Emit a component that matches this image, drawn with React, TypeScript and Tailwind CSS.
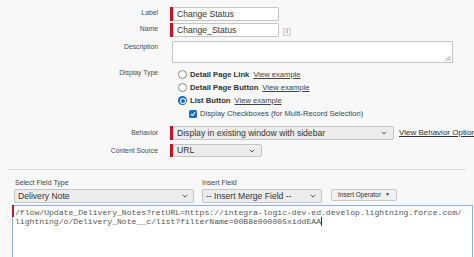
import React from 'react';

const Chevron: React.FC<{ className?: string }> = ({ className }) => (
  <svg className={className} width="6" height="4" viewBox="0 0 6 4" fill="none">
    <path d="M0.8 0.8 L3 3 L5.2 0.8" stroke="#555" strokeWidth="1" />
  </svg>
);

const RequiredBar: React.FC = () => <div className="w-[3px] self-stretch bg-[#c0182a]" />;

const Radio: React.FC<{ checked?: boolean }> = ({ checked }) =>
  checked ? (
    <div className="w-[9px] h-[9px] rounded-full bg-[#1565d8] flex items-center justify-center">
      <div className="w-[6px] h-[6px] rounded-full bg-white flex items-center justify-center">
        <div className="w-[4px] h-[4px] rounded-full bg-[#1565d8]" />
      </div>
    </div>
  ) : (
    <div className="w-[9px] h-[9px] rounded-full border border-[#8a8a8a] bg-white" />
  );

const FormLabel: React.FC<{ children: React.ReactNode; className?: string }> = ({ children, className }) => (
  <div className={`text-right text-[6.8px] text-[#4a4a56] leading-[9px] ${className ?? ''}`}>{children}</div>
);

const App: React.FC = () => {
  const radios = [
    { label: 'Detail Page Link', checked: false },
    { label: 'Detail Page Button', checked: false },
    { label: 'List Button', checked: true },
  ];

  return (
    <div
      className="w-[474px] h-[257px] overflow-hidden bg-[#f8f8f8] text-[#333]"
      style={{ fontFamily: '"Liberation Sans", Arial, sans-serif' }}
    >
      <div className="pt-[7px] grid grid-cols-[158px_1fr] gap-x-[12px]">
        {/* Label */}
        <FormLabel className="pt-[1px]">Label</FormLabel>
        <div className="flex h-[14px]">
          <RequiredBar />
          <div className="w-[106px] bg-white border border-[#c4c4c4] rounded-[1px] text-[8.6px] leading-[12px] pl-[3px]">
            Change Status
          </div>
        </div>

        {/* Name */}
        <FormLabel className="mt-[2px] pt-[1px]">Name</FormLabel>
        <div className="flex items-center mt-[2px] h-[14px]">
          <RequiredBar />
          <div className="w-[106px] h-full bg-white border border-[#c4c4c4] rounded-[1px] text-[8.6px] leading-[12px] pl-[3px]">
            Change_Status
          </div>
          <div className="ml-[4px] mt-[3px] w-[8px] h-[8px] border border-[#cfcfcf] bg-[#f2f2f2] flex items-center justify-center text-[5px] text-[#6b7fa8] font-bold leading-none">
            i
          </div>
        </div>

        {/* Description */}
        <FormLabel className="mt-[4px] pt-[1px]">Description</FormLabel>
        <div className="mt-[4px] ml-[2px] w-[281px] h-[22px] bg-white border border-[#c4c4c4] rounded-[1px] relative">
          <svg className="absolute right-[1px] bottom-[1px]" width="6" height="6" viewBox="0 0 6 6">
            <path d="M5.5 0.5 L0.5 5.5 M5.5 2.5 L2.5 5.5 M5.5 4.5 L4.5 5.5" stroke="#9a9a9a" strokeWidth="0.8" />
          </svg>
        </div>

        {/* Display Type */}
        <FormLabel className="mt-[5px]">Display Type</FormLabel>
        <div className="mt-[5px] pl-[8px]">
          {radios.map((r) => (
            <div key={r.label} className="flex items-center h-[13px]">
              <Radio checked={r.checked} />
              <span className="ml-[3px] font-bold text-[7.7px]">{r.label}</span>
              <span className="ml-[4px] underline text-[7.6px] text-[#444]">View example</span>
            </div>
          ))}
          <div className="flex items-center h-[13px] pl-[11px]">
            <div className="w-[8px] h-[8px] rounded-[1.5px] bg-[#1a6ee0] flex items-center justify-center">
              <svg width="6" height="6" viewBox="0 0 6 6" fill="none">
                <path d="M1 3.1 L2.4 4.5 L5 1.4" stroke="white" strokeWidth="1.1" />
              </svg>
            </div>
            <span className="ml-[3px] text-[7.6px] text-[#444]">Display Checkboxes (for Multi-Record Selection)</span>
          </div>
        </div>

        {/* Behavior */}
        <FormLabel className="mt-[6px] pt-[2px]">Behavior</FormLabel>
        <div className="mt-[6px] flex items-center h-[14px] whitespace-nowrap">
          <RequiredBar />
          <div className="w-[221px] shrink-0 h-full bg-[#ececec] border border-[#c4c4c4] rounded-[2px] flex items-center justify-between pl-[3px] pr-[6px] text-[8.6px]">
            <span>Display in existing window with sidebar</span>
            <Chevron />
          </div>
          <span className="ml-[5px] text-[8px] underline text-[#333]">View Behavior Options</span>
        </div>

        {/* Content Source */}
        <FormLabel className="mt-[4px] pt-[2px]">Content Source</FormLabel>
        <div className="mt-[4px] flex h-[13px]">
          <RequiredBar />
          <div className="w-[89px] h-full bg-[#ececec] border border-[#c4c4c4] rounded-[2px] flex items-center justify-between pl-[3px] pr-[6px] text-[8.6px]">
            <span>URL</span>
            <Chevron />
          </div>
        </div>
      </div>

      <div className="mt-[12px] mx-[8px] border-t border-[#dcdcdc]" />

      {/* Merge field controls */}
      <div className="mt-[8px] flex pl-[14px]">
        <div className="w-[180px]">
          <div className="text-[7px] leading-[9px] text-[#444] pl-[1px]">Select Field Type</div>
          <div className="mt-[2px] h-[14px] bg-[#ececec] border border-[#c4c4c4] rounded-[2px] flex items-center justify-between pl-[3px] pr-[5px] text-[8.6px]">
            <span>Delivery Note</span>
            <Chevron />
          </div>
        </div>
        <div className="w-[120px] ml-[8px]">
          <div className="text-[7px] leading-[9px] text-[#444]">Insert Field</div>
          <div className="mt-[2px] h-[14px] bg-[#ececec] border border-[#c4c4c4] rounded-[2px] flex items-center justify-between pl-[3px] pr-[5px] text-[8.6px]">
            <span>-- Insert Merge Field --</span>
            <Chevron />
          </div>
        </div>
        <div className="ml-[9px] mt-[11px] h-[12px] w-[66px] bg-[#f0f0f0] border border-[#c8c8c8] rounded-[2px] flex items-center justify-center gap-[4px] text-[6.4px] text-[#333]">
          <span>Insert Operator</span>
          <span className="text-[5px]">▼</span>
        </div>
      </div>

      {/* URL textarea */}
      <div className="mt-[2px] ml-[12px] w-[461px] h-[60px] bg-white border border-[#8fb3dd] relative">
        <div className="absolute left-[-1px] top-[-1px] w-[2px] h-[12px] bg-[#c0182a]" />
        <div
          className="pl-[2px] pt-[2px] text-[8.1px] leading-[9px] text-[#555] whitespace-pre"
          style={{ fontFamily: '"Liberation Mono", "Courier New", monospace' }}
        >
          <div>/flow/Update_Delivery_Notes?retURL=https://integra-logic-dev-ed.develop.lightning.force.com/</div>
          <div className="flex items-center">
            <span>lightning/o/Delivery_Note__c/list?filterName=00B8e000005xiddEAA</span>
            <span className="w-px h-[9px] bg-[#333]" />
          </div>
        </div>
      </div>
    </div>
  );
};

export default App;
